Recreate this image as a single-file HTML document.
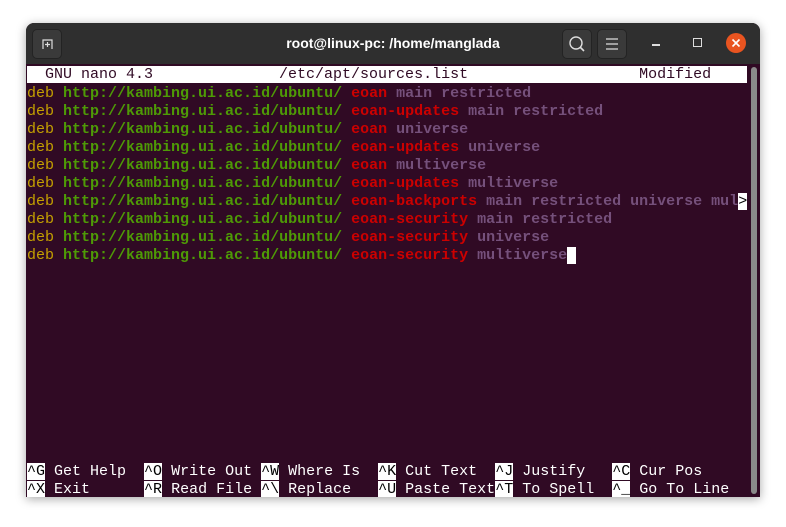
<!DOCTYPE html><html><head><style>
body{margin:0;width:786px;height:527px;background:#fff;position:relative;overflow:hidden}
.win{position:absolute;left:26px;top:23px;width:734px;height:474px;border-radius:8px 8px 0 0;background:#300a24;box-shadow:0 2px 10px rgba(0,0,0,.35);overflow:hidden}
.tb{position:absolute;left:0;top:0;width:734px;height:41px;background:#2f2f2f;color:#fff;font:bold 14px "Liberation Sans",sans-serif}
.tt{position:absolute;left:0;right:0;top:12px;text-align:center}
.btn{position:absolute;top:6px;width:28px;height:28px;border-radius:5px;background:#3a3a3a;border:1px solid #232323}
.term{position:absolute;left:1px;top:43px;font:15px/18px "Liberation Mono",monospace;color:#fff}
.row{height:18px;white-space:pre}
.hd{background:#fff;color:#300a24;width:720px;height:17px;line-height:17px}
.y{color:#c4a000}.g{color:#4e9a06;font-weight:bold}.r{color:#cc0000;font-weight:bold}.p{color:#75507b;font-weight:bold}
.k{background:#fff;color:#000}
.sb{position:absolute;left:725px;top:44px;width:6px;height:427px;background:#8a8a8a;border-radius:3px}
</style></head><body><div class="win">
<div class="tb"><div class="btn" style="left:6px"><svg width="28" height="28"><path d="M10 19V10h9v9M14.5 12v5M12 14.5h5" stroke="#ddd" fill="none" stroke-width="1.2"/></svg></div>
<div class="tt">root@linux-pc: /home/manglada</div>
<div class="btn" style="left:536px"><svg width="28" height="28"><circle cx="13" cy="13" r="6" stroke="#ddd" fill="none" stroke-width="1.4"/><path d="M17 17l4 4" stroke="#ddd" stroke-width="1.6"/></svg></div>
<div class="btn" style="left:571px"><svg width="28" height="28"><path d="M8 9h12M8 14h12M8 19h12" stroke="#ddd" stroke-width="1.2"/></svg></div>
<div style="position:absolute;left:626px;top:21px;width:8px;height:1.5px;background:#ddd"></div>
<div style="position:absolute;left:667px;top:15px;width:7px;height:7px;border:1.3px solid #ddd"></div>
<div style="position:absolute;left:700px;top:10px;width:20px;height:20px;border-radius:50%;background:#e95420"><svg width="20" height="20"><path d="M6.5 6.5l7 7M13.5 6.5l-7 7" stroke="#fff" stroke-width="1.6"/></svg></div>
</div>
<div class="term"><div class="row hd">  GNU nano 4.3              /etc/apt/sources.list                   Modified  </div><div style="height:2px"></div><div class="row"><span class="y">deb</span> <span class="g">http://kambing.ui.ac.id/ubuntu/</span> <span class="r">eoan</span> <span class="p">main restricted</span></div><div class="row"><span class="y">deb</span> <span class="g">http://kambing.ui.ac.id/ubuntu/</span> <span class="r">eoan-updates</span> <span class="p">main restricted</span></div><div class="row"><span class="y">deb</span> <span class="g">http://kambing.ui.ac.id/ubuntu/</span> <span class="r">eoan</span> <span class="p">universe</span></div><div class="row"><span class="y">deb</span> <span class="g">http://kambing.ui.ac.id/ubuntu/</span> <span class="r">eoan-updates</span> <span class="p">universe</span></div><div class="row"><span class="y">deb</span> <span class="g">http://kambing.ui.ac.id/ubuntu/</span> <span class="r">eoan</span> <span class="p">multiverse</span></div><div class="row"><span class="y">deb</span> <span class="g">http://kambing.ui.ac.id/ubuntu/</span> <span class="r">eoan-updates</span> <span class="p">multiverse</span></div><div class="row"><span class="y">deb</span> <span class="g">http://kambing.ui.ac.id/ubuntu/</span> <span class="r">eoan-backports</span> <span class="p">main restricted universe mul</span><span class="k">&gt;</span></div><div class="row"><span class="y">deb</span> <span class="g">http://kambing.ui.ac.id/ubuntu/</span> <span class="r">eoan-security</span> <span class="p">main restricted</span></div><div class="row"><span class="y">deb</span> <span class="g">http://kambing.ui.ac.id/ubuntu/</span> <span class="r">eoan-security</span> <span class="p">universe</span></div><div class="row"><span class="y">deb</span> <span class="g">http://kambing.ui.ac.id/ubuntu/</span> <span class="r">eoan-security</span> <span class="p">multiverse</span><span class="k"> </span></div><div class="row"></div><div class="row"></div><div class="row"></div><div class="row"></div><div class="row"></div><div class="row"></div><div class="row"></div><div class="row"></div><div class="row"></div><div class="row"></div><div class="row"></div><div class="row"><span class="k">^G</span> Get Help  <span class="k">^O</span> Write Out <span class="k">^W</span> Where Is  <span class="k">^K</span> Cut Text  <span class="k">^J</span> Justify   <span class="k">^C</span> Cur Pos</div><div class="row"><span class="k">^X</span> Exit      <span class="k">^R</span> Read File <span class="k">^\</span> Replace   <span class="k">^U</span> Paste Text<span class="k">^T</span> To Spell  <span class="k">^_</span> Go To Line</div></div>
<div class="sb"></div>
</div></body></html>
